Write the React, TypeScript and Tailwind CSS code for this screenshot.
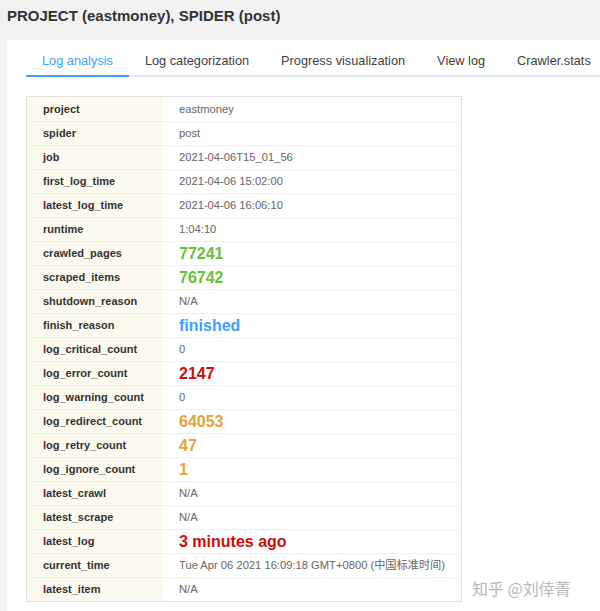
import React from 'react';

type Row = {
    key: string;
    value: string;
    tone?: 'green' | 'blue' | 'red' | 'orange';
};

const rows: Row[] = [
    { key: 'project', value: 'eastmoney' },
    { key: 'spider', value: 'post' },
    { key: 'job', value: '2021-04-06T15_01_56' },
    { key: 'first_log_time', value: '2021-04-06 15:02:00' },
    { key: 'latest_log_time', value: '2021-04-06 16:06:10' },
    { key: 'runtime', value: '1:04:10' },
    { key: 'crawled_pages', value: '77241', tone: 'green' },
    { key: 'scraped_items', value: '76742', tone: 'green' },
    { key: 'shutdown_reason', value: 'N/A' },
    { key: 'finish_reason', value: 'finished', tone: 'blue' },
    { key: 'log_critical_count', value: '0' },
    { key: 'log_error_count', value: '2147', tone: 'red' },
    { key: 'log_warning_count', value: '0' },
    { key: 'log_redirect_count', value: '64053', tone: 'orange' },
    { key: 'log_retry_count', value: '47', tone: 'orange' },
    { key: 'log_ignore_count', value: '1', tone: 'orange' },
    { key: 'latest_crawl', value: 'N/A' },
    { key: 'latest_scrape', value: 'N/A' },
    { key: 'latest_log', value: '3 minutes ago', tone: 'red' },
    { key: 'current_time', value: 'Tue Apr 06 2021 16:09:18 GMT+0800 (中国标准时间)' },
    { key: 'latest_item', value: 'N/A' },
];

const toneClass: Record<string, string> = {
    green: 'text-[#67c23a] font-bold text-[16px]',
    blue: 'text-[#409eff] font-bold text-[16px]',
    red: 'text-[#d10a0a] font-bold text-[16px]',
    orange: 'text-[#e6a23c] font-bold text-[16px]',
};

const tabs = ['Log analysis', 'Log categorization', 'Progress visualization', 'View log', 'Crawler.stats'];

export default function App() {
    return (
        <div
            className="relative w-[600px] h-[611px] overflow-hidden bg-[#f2f2f2]"
            style={{ fontFamily: '"Liberation Sans", Arial, "Noto Sans CJK SC", sans-serif' }}
        >
            <div className="h-[40px] pl-[7px] pt-[6px] text-[15px] font-bold text-[#333] leading-[20px]">
                PROJECT (eastmoney), SPIDER (post)
            </div>

            <div className="ml-[7px] bg-white h-[571px] pl-[19px] pt-[3px]">
                {/* tabs */}
                <div className="flex border-b-2 border-[#e4e7ed] h-[34px]">
                    {tabs.map((t, i) => (
                        <div
                            key={t}
                            className={`px-[16px] text-[12.75px] leading-[36px] whitespace-nowrap -mb-[2px] border-b-2 ${
                                i === 0 ? 'text-[#409eff] border-[#409eff]' : 'text-[#404040] border-transparent'
                            }`}
                        >
                            {t}
                        </div>
                    ))}
                </div>

                {/* stats table */}
                <div className="mt-[19px] w-[436px] border border-[#e0e0e0]">
                    {rows.map((r, i) => (
                        <div
                            key={r.key}
                            className={`flex h-[24px] items-center ${i > 0 ? 'border-t border-[#ebeef5]' : ''}`}
                        >
                            <div className="w-[136px] h-full flex items-center pl-[16px] bg-[#fcfaef] font-bold text-[11px] text-[#333]">
                                {r.key}
                            </div>
                            <div
                                className={`flex-1 h-full flex items-center pl-[16px] whitespace-nowrap ${
                                    r.tone ? toneClass[r.tone] : 'text-[11.2px] text-[#666]'
                                }`}
                            >
                                {r.value}
                            </div>
                        </div>
                    ))}
                </div>
            </div>

            {/* watermark */}
            <div
                className="absolute left-[472px] top-[576px] text-[16px] text-[#b8b8b8] whitespace-nowrap"
                style={{ fontFamily: '"Noto Sans CJK SC", sans-serif' }}
            >
                知乎 @刘倖菁
            </div>
        </div>
    );
}
